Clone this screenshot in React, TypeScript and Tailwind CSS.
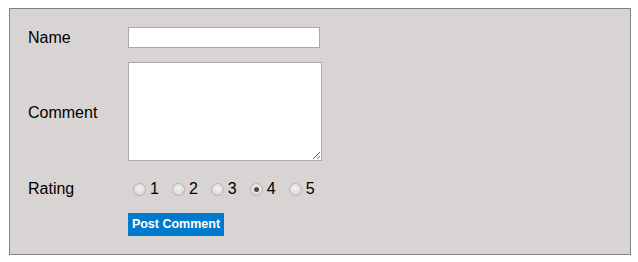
import React from "react";

function Radio({ checked, label }: { checked?: boolean; label: string }) {
  return (
    <label className="flex items-center">
      <span
        className="ml-[5px] mr-[4px] flex h-[13px] w-[13px] items-center justify-center rounded-full border border-[#b4b4b4] bg-[radial-gradient(circle_at_50%_40%,#f4f4f4_0%,#dedede_60%,#cfcfcf_100%)]"
      >
        {checked ? <span className="block h-[5px] w-[5px] rounded-full bg-[#4a4a4a]" /> : null}
      </span>
      <span className="text-[16px] leading-[18px] text-black">{label}</span>
    </label>
  );
}

export default function App() {
  return (
    <div
      className="pl-[9px] pt-[8px]"
      style={{ fontFamily: '"Liberation Sans", Arial, sans-serif' }}
    >
      <div className="h-[247px] w-[622px] border border-[#808080] bg-[#d8d4d3] pl-[18px] pt-[18px]">
        <div className="flex h-[21px] items-center">
          <div className="w-[100px] text-[16px] leading-[21px] text-black">Name</div>
          <input
            type="text"
            className="h-[21px] w-[192px] border border-[#a9a9a9] bg-white outline-none"
          />
        </div>
        <div className="mt-[14px] flex items-center">
          <div className="w-[100px] pt-[2px] text-[16px] leading-[21px] text-black">Comment</div>
          <textarea className="block h-[99px] w-[194px] border border-[#a9a9a9] bg-white outline-none" />
        </div>
        <div className="mt-[18px] flex h-[20px] items-center">
          <div className="w-[100px] text-[16px] leading-[20px] text-black">Rating</div>
          <div className="flex items-center gap-[8px]">
            <Radio label="1" />
            <Radio label="2" />
            <Radio label="3" />
            <Radio label="4" checked />
            <Radio label="5" />
          </div>
        </div>
        <div className="mt-[14px] flex">
          <div className="w-[100px]" />
          <button className="flex h-[23px] w-[96px] items-center justify-center bg-[#007acc] text-[12.5px] font-bold leading-[23px] text-white">
            Post Comment
          </button>
        </div>
      </div>
    </div>
  );
}
